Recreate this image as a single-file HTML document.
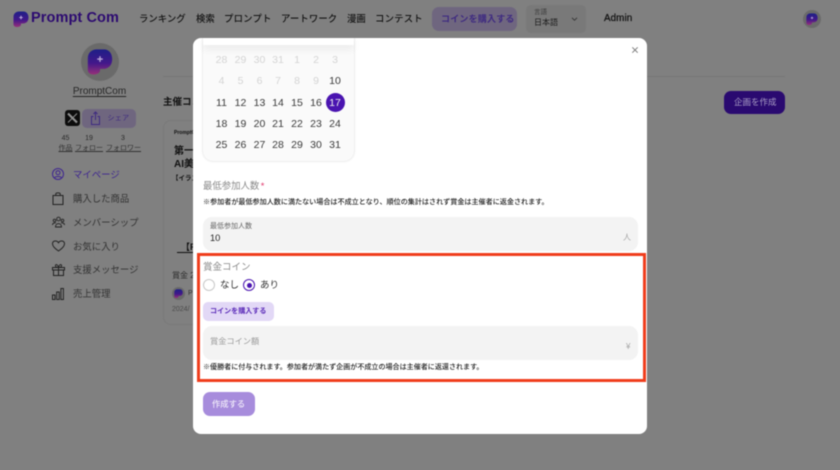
<!DOCTYPE html>
<html lang="ja"><head><meta charset="utf-8"><style>
*{box-sizing:border-box;margin:0;padding:0}
html,body{width:840px;height:470px;overflow:hidden;background:#808080}
body{font-family:"Liberation Sans","Noto Sans CJK JP",sans-serif;position:relative}
#w{position:absolute;left:0;top:0;width:840px;height:470px;filter:blur(.5px)}
.t{position:absolute;white-space:nowrap;line-height:1}
.c{transform:translateX(-50%)}
.n{position:absolute;white-space:nowrap;line-height:1;font-size:9.400px;font-weight:500;color:#141414;top:14px}
.m{position:absolute;left:73px;white-space:nowrap;line-height:1;font-size:9.400px;color:#333}
.d{position:absolute;width:20px;text-align:center;font-size:10.500px;line-height:1;color:#3a3a3a}
.o{color:#d4d4d4}
svg{position:absolute;overflow:visible}
</style></head><body><div id="w">

<svg style="left:13px;top:11px" width="16" height="16" viewBox="0 0 16 16"><defs><linearGradient id="g" x1="0" y1="0" x2="0" y2="1"><stop offset="0" stop-color="#1e1f88"/><stop offset=".55" stop-color="#43188a"/><stop offset="1" stop-color="#96307a"/></linearGradient></defs><path d="M.5 6C.5 2.500 3 .5 6 .5H10.500C13.500 .5 15.500 3 15.500 6.500S13.500 12.500 10 12.500H8V13.500C8 15 6 16 4 16S.5 15 .5 13Z" fill="url(#g)"/><path d="M8 4.800V8.200M6.300 6.500H9.700" stroke="#b9a8d8" stroke-width="1"/></svg>
<div class="t" style="left:31px;top:11px;font-size:14.500px;font-weight:700;color:#2c0a70;letter-spacing:.1px">Prompt Com</div>

<div class="n" style="left:139px">ランキング</div>
<div class="n" style="left:196px">検索</div>
<div class="n" style="left:224px;letter-spacing:.2px">プロンプト</div>
<div class="n" style="left:281px;letter-spacing:.1px">アートワーク</div>
<div class="n" style="left:347px">漫画</div>
<div class="n" style="left:375px;letter-spacing:.2px">コンテスト</div>

<div style="position:absolute;left:432px;top:7px;width:85px;height:24px;border-radius:7px;background:#6f667f"></div>
<div class="t" style="left:441px;top:14.500px;font-size:9px;font-weight:700;color:#3e2a80;letter-spacing:.2px">コインを購入する</div>
<div style="position:absolute;left:526px;top:5px;width:60px;height:28px;border-radius:5px;background:#797979"></div>
<div class="t" style="left:534px;top:9.500px;font-size:6.500px;color:#3d3d3d">言語</div>
<div class="t" style="left:534px;top:19px;font-size:8px;color:#1a1a1a">日本語</div>
<svg style="left:571px;top:17px" width="8" height="5"><path d="M1 .8L3.500 3.300L6 .8" stroke="#333" fill="none" stroke-width=".9"/></svg>
<div class="t" style="left:604px;top:14px;font-size:9.800px;font-weight:400;-webkit-text-stroke:.3px #161616;color:#161616;letter-spacing:.1px">Admin</div>
<div style="position:absolute;left:803px;top:10px;width:18px;height:18px;border-radius:50%;background:#6a6a6a"></div>
<svg style="left:806px;top:13px" width="12" height="12" viewBox="0 0 16 16"><path d="M.5 6C.5 2.500 3 .5 6 .5H10.500C13.500 .5 15.500 3 15.500 6.500S13.500 12.500 10 12.500H8V13.500C8 15 6 16 4 16S.5 15 .5 13Z" fill="url(#g)"/><path d="M8 4.800V8.200M6.300 6.500H9.700" stroke="#b9a8d8" stroke-width="1"/></svg>

<div style="position:absolute;left:163px;top:76px;width:622px;height:1px;background:#777"></div>

<div style="position:absolute;left:81px;top:43px;width:38px;height:38px;border-radius:50%;background:#6a6a6a"></div>
<svg style="left:87px;top:48px" width="26" height="27" viewBox="0 0 16 16"><path d="M.5 6C.5 2.500 3 .5 6 .5H10.500C13.500 .5 15.500 3 15.500 6.500S13.500 12.500 10 12.500H8V13.500C8 15 6 16 4 16S.5 15 .5 13Z" fill="url(#g)"/><path d="M8 4.800V8.200M6.300 6.500H9.700" stroke="#b9a8d8" stroke-width=".8"/></svg>
<div class="t c" style="left:99.500px;top:87px;font-size:10px;color:#262626;text-decoration:underline;text-underline-offset:1.500px">PromptCom</div>

<div style="position:absolute;left:65px;top:110px;width:15px;height:16px;border-radius:3px;background:#0c0c0c"></div>
<svg style="left:67px;top:113px" width="11" height="10" stroke="#8f8f8f" fill="none"><path d="M1 .5L10 9.500" stroke-width="2.200"/><path d="M10 .5L1 9.500" stroke-width="1"/></svg>
<div style="position:absolute;left:82px;top:109px;width:54px;height:19px;border-radius:5px;background:#6f667f"></div>
<svg style="left:90px;top:111px" width="11" height="15" fill="none" stroke="#3e2a80" stroke-width="1"><path d="M5.500 1V9M3.500 3L5.500 1L7.500 3M3.500 5.500H1.500V13.500H9.500V5.500H7.500"/></svg>
<div class="t" style="left:107.500px;top:114.500px;font-size:7px;color:#3e2a80;letter-spacing:.3px">シェア</div>
<div class="t c" style="left:65.500px;top:135px;font-size:7px;color:#2a2a2a">45</div>
<div class="t c" style="left:89px;top:135px;font-size:7px;color:#2a2a2a">19</div>
<div class="t c" style="left:123px;top:135px;font-size:7px;color:#2a2a2a">3</div>
<div class="t c" style="left:65.500px;top:144.500px;font-size:7px;color:#333;text-decoration:underline">作品</div>
<div class="t c" style="left:89px;top:144.500px;font-size:7px;color:#333;text-decoration:underline">フォロー</div>
<div class="t c" style="left:123.500px;top:144.500px;font-size:7px;color:#333;text-decoration:underline">フォロワー</div>

<svg style="left:52px;top:168px" width="12" height="12" fill="none" stroke="#3e2590" stroke-width="1"><circle cx="6" cy="6" r="5.500"/><circle cx="6" cy="4.700" r="2"/><path d="M2.500 9.800C3.500 8 8.500 8 9.500 9.800"/></svg>
<div class="m" style="top:170px;color:#3e2590">マイページ</div>
<svg style="left:52px;top:192px" width="12" height="13" fill="none" stroke="#222" stroke-width="1"><path d="M1 3.500H11V12.500H1ZM3.800 3.500V2C3.800 .5 8.200 .5 8.200 2V3.500"/></svg>
<div class="m" style="top:194px">購入した商品</div>
<svg style="left:52px;top:216px" width="13" height="12" fill="none" stroke="#222" stroke-width=".9"><circle cx="6.500" cy="3" r="1.800"/><circle cx="2.500" cy="4.500" r="1.300"/><circle cx="10.500" cy="4.500" r="1.300"/><path d="M.5 9C.5 7 3 6.500 4 7M12.500 9C12.500 7 10 6.500 9 7M3.500 11C3.500 6.500 9.500 6.500 9.500 11Z"/></svg>
<div class="m" style="top:217.500px">メンバーシップ</div>
<svg style="left:52px;top:240px" width="13" height="12" fill="none" stroke="#222" stroke-width="1"><path d="M6.500 11C2 8 .5 6 .5 3.800C.5 .8 4.800 -.2 6.500 2.800C8.200 -.2 12.500 .8 12.500 3.800C12.500 6 11 8 6.500 11Z"/></svg>
<div class="m" style="top:241.500px">お気に入り</div>
<svg style="left:52px;top:264px" width="13" height="12" fill="none" stroke="#222" stroke-width="1"><path d="M.5 3.500H12.500V6H.5ZM1.500 6V11.500H11.500V6M6.500 3.500V11.500M6.500 3.500C4 3.500 3 2.500 3.500 1.200C4.200 -.2 6 1 6.500 3.500C7 1 8.800 -.2 9.500 1.200C10 2.500 9 3.500 6.500 3.500Z"/></svg>
<div class="m" style="top:265px">支援メッセージ</div>
<svg style="left:52px;top:288px" width="12" height="12" fill="none" stroke="#222" stroke-width="1"><rect x=".5" y="7" width="2.500" height="4.500"/><rect x="4.700" y="4" width="2.500" height="7.500"/><rect x="8.900" y=".5" width="2.500" height="11"/></svg>
<div class="m" style="top:289px">売上管理</div>

<div class="t" style="left:163px;top:97.500px;font-size:9.500px;font-weight:700;color:#111">主催コンテスト</div>
<div style="position:absolute;left:163px;top:120px;width:60px;height:205px;border:1px solid #797979;border-radius:8px"></div>
<div class="t" style="left:174px;top:131px;font-size:5px;font-weight:700;color:#111">PromptCom</div>
<div class="t" style="left:174px;top:147px;font-size:10px;font-weight:700;color:#111">第一回</div>
<div class="t" style="left:174px;top:160px;font-size:10px;font-weight:700;color:#111">AI美女</div>
<div class="t" style="left:172px;top:176px;font-size:6.500px;font-weight:700;color:#111">【イラスト</div>
<div class="t" style="left:177px;top:243px;font-size:9px;font-weight:700;color:#111;border-bottom:1px solid #111;padding-left:4px">【Prompt</div>
<div class="t" style="left:172px;top:272px;font-size:8px;color:#2a2a2a">賞金 2</div>
<div style="position:absolute;left:172px;top:287px;width:13px;height:13px;border-radius:50%;background:#6a6a6a"></div>
<svg style="left:174px;top:289px" width="9" height="9" viewBox="0 0 16 16"><path d="M.5 6C.5 2.500 3 .5 6 .5H10.500C13.500 .5 15.500 3 15.500 6.500S13.500 12.500 10 12.500H8V13.500C8 15 6 16 4 16S.5 15 .5 13Z" fill="url(#g)"/></svg>
<div class="t" style="left:188px;top:290px;font-size:7px;color:#333">P</div>
<div class="t" style="left:172px;top:306px;font-size:7px;color:#4a4a4a">2024/</div>

<div style="position:absolute;left:724px;top:91px;width:61px;height:23px;border-radius:7px;background:#2a0a70"></div>
<div class="t" style="left:734px;top:98px;font-size:8.500px;color:#a89cc4">企画を作成</div>

<!-- modal -->
<div style="position:absolute;left:193px;top:38px;width:454px;height:396px;background:#fff;border-radius:8px;overflow:hidden">
 <div style="position:absolute;left:10px;top:-40px;width:151px;height:163px;background:#fafafa;border-radius:10px;box-shadow:0 0 2px rgba(0,0,0,.18)"></div>
 <div style="position:absolute;left:10px;top:0;width:151px;height:7px;background:#fff;box-shadow:0 4px 8px rgba(0,0,0,.07)"></div>
</div>
<svg style="left:632px;top:47px" width="6" height="6" stroke="#777" stroke-width=".9"><path d="M.3 .3L5.700 5.700M5.700 .3L.3 5.700"/></svg>

<div class="d o" style="left:211.500px;top:55px">28</div><div class="d o" style="left:230.500px;top:55px">29</div><div class="d o" style="left:249.500px;top:55px">30</div><div class="d o" style="left:268px;top:55px">31</div><div class="d o" style="left:287px;top:55px">1</div><div class="d o" style="left:306px;top:55px">2</div><div class="d o" style="left:325px;top:55px">3</div>
<div class="d o" style="left:211.500px;top:76px">4</div><div class="d o" style="left:230.500px;top:76px">5</div><div class="d o" style="left:249.500px;top:76px">6</div><div class="d o" style="left:268px;top:76px">7</div><div class="d o" style="left:287px;top:76px">8</div><div class="d o" style="left:306px;top:76px">9</div><div class="d" style="left:325px;top:76px">10</div>
<div class="d" style="left:211.500px;top:97.500px">11</div><div class="d" style="left:230.500px;top:97.500px">12</div><div class="d" style="left:249.500px;top:97.500px">13</div><div class="d" style="left:268px;top:97.500px">14</div><div class="d" style="left:287px;top:97.500px">15</div><div class="d" style="left:306px;top:97.500px">16</div>
<div style="position:absolute;left:325.500px;top:93px;width:19px;height:19px;border-radius:50%;background:#4a14b0"></div><div class="d" style="left:325px;top:97.500px;color:#eee">17</div>
<div class="d" style="left:211.500px;top:119px">18</div><div class="d" style="left:230.500px;top:119px">19</div><div class="d" style="left:249.500px;top:119px">20</div><div class="d" style="left:268px;top:119px">21</div><div class="d" style="left:287px;top:119px">22</div><div class="d" style="left:306px;top:119px">23</div><div class="d" style="left:325px;top:119px">24</div>
<div class="d" style="left:211.500px;top:140px">25</div><div class="d" style="left:230.500px;top:140px">26</div><div class="d" style="left:249.500px;top:140px">27</div><div class="d" style="left:268px;top:140px">28</div><div class="d" style="left:287px;top:140px">29</div><div class="d" style="left:306px;top:140px">30</div><div class="d" style="left:325px;top:140px">31</div>

<div class="t" style="left:203px;top:181px;font-size:9.400px;color:#8a8a8a">最低参加人数<span style="color:#e0356a;margin-left:1.500px">*</span></div>
<div class="t" style="left:203px;top:199px;font-size:7.090px;font-weight:500;color:#222">※参加者が最低参加人数に満たない場合は不成立となり、順位の集計はされず賞金は主催者に返金されます。</div>
<div style="position:absolute;left:203px;top:216.500px;width:435px;height:34px;border-radius:9px;background:#f3f3f3"></div>
<div class="t" style="left:210px;top:222.500px;font-size:7px;color:#666">最低参加人数</div>
<div class="t" style="left:210px;top:234px;font-size:9.300px;color:#222">10</div>
<div class="t" style="left:623px;top:234px;font-size:8px;color:#a5a5a5">人</div>

<div style="position:absolute;left:196.500px;top:253px;width:449px;height:129px;border:3px solid #f03d1c"></div>
<div class="t" style="left:203px;top:262.500px;font-size:9.500px;color:#8a8a8a">賞金コイン</div>
<div style="position:absolute;left:203px;top:279px;width:12px;height:12px;border-radius:50%;border:1px solid #c8c8c8;background:#fff"></div>
<div class="t" style="left:220px;top:281px;font-size:9.500px;color:#333">なし</div>
<div style="position:absolute;left:243px;top:279px;width:12px;height:12px;border-radius:50%;border:1.200px solid #4a14b0;background:#fff"></div>
<div style="position:absolute;left:246.500px;top:282.500px;width:5px;height:5px;border-radius:50%;background:#4a14b0"></div>
<div class="t" style="left:260px;top:281px;font-size:9.500px;color:#333">あり</div>

<div style="position:absolute;left:203px;top:302px;width:71px;height:19px;border-radius:5px;background:#e2d8f6"></div>
<div class="t" style="left:210px;top:308px;font-size:7.050px;font-weight:700;color:#5a2ab8">コインを購入する</div>
<div style="position:absolute;left:203px;top:325.500px;width:435px;height:34px;border-radius:9px;background:#f3f3f3"></div>
<div class="t" style="left:210px;top:338px;font-size:8.200px;color:#9a9a9a">賞金コイン額</div>
<div class="t" style="left:626px;top:342.500px;font-size:8px;color:#a5a5a5">¥</div>
<div class="t" style="left:203px;top:364px;font-size:7.050px;font-weight:500;color:#222">※優勝者に付与されます。参加者が満たず企画が不成立の場合は主催者に返還されます。</div>

<div style="position:absolute;left:203px;top:392px;width:52px;height:24px;border-radius:7px;background:#a78cdc"></div>
<div class="t" style="left:212px;top:400px;font-size:8.300px;font-weight:500;color:#efe9f9">作成する</div>

</div></body></html>
